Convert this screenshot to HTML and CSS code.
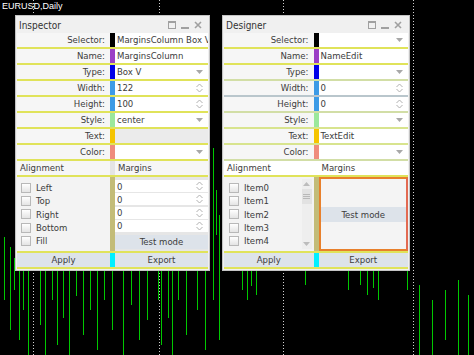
FILE: index.html
```html
<!DOCTYPE html>
<html>
<head>
<meta charset="utf-8">
<link rel="stylesheet" href="styles.css">
</head>
<body>
<div class="chart">
  <svg class="grid-lines" width="474" height="355">
    <g class="dots">
      <line x1="33.5" y1="0" x2="33.5" y2="355"/>
      <line x1="159.5" y1="0" x2="159.5" y2="355"/>
      <line x1="283.5" y1="0" x2="283.5" y2="355"/>
      <line x1="413.5" y1="0" x2="413.5" y2="355"/>
    </g>
    <g class="bars">
      <line x1="4.5" y1="237" x2="4.5" y2="300"/>
      <line x1="10.5" y1="247" x2="10.5" y2="330"/>
      <line x1="14.5" y1="258" x2="14.5" y2="290"/>
      <line x1="19.5" y1="271" x2="19.5" y2="340"/>
      <line x1="23.5" y1="271" x2="23.5" y2="310"/>
      <line x1="28.5" y1="271" x2="28.5" y2="355"/>
      <line x1="40.5" y1="271" x2="40.5" y2="325"/>
      <line x1="45.5" y1="271" x2="45.5" y2="355"/>
      <line x1="52.5" y1="271" x2="52.5" y2="300"/>
      <line x1="57.5" y1="271" x2="57.5" y2="345"/>
      <line x1="63.5" y1="271" x2="63.5" y2="318"/>
      <line x1="69.5" y1="271" x2="69.5" y2="355"/>
      <line x1="76.5" y1="271" x2="76.5" y2="296"/>
      <line x1="83.5" y1="271" x2="83.5" y2="335"/>
      <line x1="90.5" y1="271" x2="90.5" y2="310"/>
      <line x1="97.5" y1="271" x2="97.5" y2="350"/>
      <line x1="104.5" y1="271" x2="104.5" y2="300"/>
      <line x1="112.5" y1="271" x2="112.5" y2="330"/>
      <line x1="123.5" y1="271" x2="123.5" y2="355"/>
      <line x1="131.5" y1="271" x2="131.5" y2="305"/>
      <line x1="139.5" y1="271" x2="139.5" y2="340"/>
      <line x1="147.5" y1="271" x2="147.5" y2="320"/>
      <line x1="158.5" y1="271" x2="158.5" y2="300"/>
      <line x1="161.5" y1="271" x2="161.5" y2="345"/>
      <line x1="168.5" y1="271" x2="168.5" y2="318"/>
      <line x1="172.5" y1="271" x2="172.5" y2="355"/>
      <line x1="178.5" y1="271" x2="178.5" y2="300"/>
      <line x1="186.5" y1="271" x2="186.5" y2="335"/>
      <line x1="197.5" y1="271" x2="197.5" y2="310"/>
      <line x1="205.5" y1="271" x2="205.5" y2="350"/>
      <line x1="213.5" y1="148" x2="213.5" y2="300"/>
      <line x1="216.5" y1="190" x2="216.5" y2="235"/>
      <line x1="219.5" y1="215" x2="219.5" y2="340"/>
      <line x1="242.5" y1="271" x2="242.5" y2="290"/>
      <line x1="247.5" y1="271" x2="247.5" y2="300"/>
      <line x1="251.5" y1="271" x2="251.5" y2="286"/>
      <line x1="256.5" y1="271" x2="256.5" y2="295"/>
      <line x1="305.5" y1="271" x2="305.5" y2="285"/>
      <line x1="348.5" y1="271" x2="348.5" y2="290"/>
      <line x1="360.5" y1="271" x2="360.5" y2="285"/>
      <line x1="367.5" y1="271" x2="367.5" y2="295"/>
      <line x1="373.5" y1="271" x2="373.5" y2="288"/>
      <line x1="378.5" y1="271" x2="378.5" y2="300"/>
      <line x1="407.5" y1="271" x2="407.5" y2="290"/>
      <line x1="419.5" y1="285" x2="419.5" y2="355"/>
      <line x1="432.5" y1="300" x2="432.5" y2="355"/>
      <line x1="445.5" y1="290" x2="445.5" y2="340"/>
      <line x1="458.5" y1="280" x2="458.5" y2="355"/>
      <line x1="468.5" y1="295" x2="468.5" y2="355"/>
    </g>
  </svg>
  <div class="symbol">EURUSD,Daily</div>
</div>

<div class="window w1">
  <div class="titlebar">
    <span class="title">Inspector</span>
    <span class="ctrls">
      <svg width="8" height="8" viewBox="0 0 8 8"><rect x="0.5" y="0.5" width="7" height="7" fill="none" stroke="#a0a0a0"/><line x1="0" y1="1.5" x2="8" y2="1.5" stroke="#a0a0a0"/></svg>
      <svg width="8" height="8" viewBox="0 0 8 8"><rect x="0" y="6" width="8" height="2" fill="#a0a0a0"/></svg>
      <svg width="8" height="8" viewBox="0 0 8 8"><path d="M1 1L7 7M7 1L1 7" stroke="#a0a0a0" stroke-width="1.6"/></svg>
    </span>
  </div>
  <div class="row"><div class="lbl">Selector:</div><div class="strip s-black"></div><div class="val">MarginsColumn Box V</div></div>
  <div class="row"><div class="lbl">Name:</div><div class="strip s-purple"></div><div class="val">MarginsColumn</div></div>
  <div class="row"><div class="lbl">Type:</div><div class="strip s-blue"></div><div class="val"><span>Box V</span><svg class="drop" width="7" height="4" viewBox="0 0 7 4"><path d="M0 0H7L3.5 4Z"/></svg></div></div>
  <div class="row"><div class="lbl">Width:</div><div class="strip s-sky"></div><div class="val"><span>122</span><svg class="spinarr" width="7" height="10" viewBox="0 0 7 10"><path d="M0.5 4L3.5 1L6.5 4M0.5 6L3.5 9L6.5 6" fill="none"/></svg></div></div>
  <div class="row"><div class="lbl">Height:</div><div class="strip s-sky"></div><div class="val"><span>100</span><svg class="spinarr" width="7" height="10" viewBox="0 0 7 10"><path d="M0.5 4L3.5 1L6.5 4M0.5 6L3.5 9L6.5 6" fill="none"/></svg></div></div>
  <div class="row"><div class="lbl">Style:</div><div class="strip s-green"></div><div class="val"><span>center</span><svg class="drop" width="7" height="4" viewBox="0 0 7 4"><path d="M0 0H7L3.5 4Z"/></svg></div></div>
  <div class="row"><div class="lbl">Text:</div><div class="strip s-gold"></div><div class="val disabled"></div></div>
  <div class="row"><div class="lbl">Color:</div><div class="strip s-salmon"></div><div class="val"><span></span><svg class="drop" width="7" height="4" viewBox="0 0 7 4"><path d="M0 0H7L3.5 4Z"/></svg></div></div>
  <div class="row head"><div class="hcell">Alignment</div><div class="strip s-light"></div><div class="hcell">Margins</div></div>
  <div class="lists">
    <div class="checks">
      <div class="check"><span class="box"></span>Left</div>
      <div class="check"><span class="box"></span>Top</div>
      <div class="check"><span class="box"></span>Right</div>
      <div class="check"><span class="box"></span>Bottom</div>
      <div class="check"><span class="box"></span>Fill</div>
    </div>
    <div class="strip s-olive"></div>
    <div class="margins">
      <div class="spin"><span>0</span><svg class="spinarr" width="7" height="10" viewBox="0 0 7 10"><path d="M0.5 4L3.5 1L6.5 4M0.5 6L3.5 9L6.5 6" fill="none"/></svg></div>
      <div class="spin"><span>0</span><svg class="spinarr" width="7" height="10" viewBox="0 0 7 10"><path d="M0.5 4L3.5 1L6.5 4M0.5 6L3.5 9L6.5 6" fill="none"/></svg></div>
      <div class="spin"><span>0</span><svg class="spinarr" width="7" height="10" viewBox="0 0 7 10"><path d="M0.5 4L3.5 1L6.5 4M0.5 6L3.5 9L6.5 6" fill="none"/></svg></div>
      <div class="spin"><span>0</span><svg class="spinarr" width="7" height="10" viewBox="0 0 7 10"><path d="M0.5 4L3.5 1L6.5 4M0.5 6L3.5 9L6.5 6" fill="none"/></svg></div>
      <div class="btn test">Test mode</div>
    </div>
  </div>
  <div class="actions"><div class="btn">Apply</div><div class="strip s-cyan"></div><div class="btn">Export</div></div>
</div>

<div class="window w2">
  <div class="titlebar">
    <span class="title">Designer</span>
    <span class="ctrls">
      <svg width="8" height="8" viewBox="0 0 8 8"><rect x="0.5" y="0.5" width="7" height="7" fill="none" stroke="#a0a0a0"/><line x1="0" y1="1.5" x2="8" y2="1.5" stroke="#a0a0a0"/></svg>
      <svg width="8" height="8" viewBox="0 0 8 8"><rect x="0" y="6" width="8" height="2" fill="#a0a0a0"/></svg>
      <svg width="8" height="8" viewBox="0 0 8 8"><path d="M1 1L7 7M7 1L1 7" stroke="#a0a0a0" stroke-width="1.6"/></svg>
    </span>
  </div>
  <div class="row"><div class="lbl">Selector:</div><div class="strip s-black"></div><div class="val"><span></span><svg class="drop" width="7" height="4" viewBox="0 0 7 4"><path d="M0 0H7L3.5 4Z"/></svg></div></div>
  <div class="row"><div class="lbl">Name:</div><div class="strip s-purple"></div><div class="val">NameEdit</div></div>
  <div class="row sep-pale"><div class="lbl">Type:</div><div class="strip s-blue"></div><div class="val"><span></span><svg class="drop" width="7" height="4" viewBox="0 0 7 4"><path d="M0 0H7L3.5 4Z"/></svg></div></div>
  <div class="row sep-grey"><div class="lbl">Width:</div><div class="strip s-sky"></div><div class="val"><span>0</span><svg class="spinarr" width="7" height="10" viewBox="0 0 7 10"><path d="M0.5 4L3.5 1L6.5 4M0.5 6L3.5 9L6.5 6" fill="none"/></svg></div></div>
  <div class="row sep-pale"><div class="lbl">Height:</div><div class="strip s-sky"></div><div class="val"><span>0</span><svg class="spinarr" width="7" height="10" viewBox="0 0 7 10"><path d="M0.5 4L3.5 1L6.5 4M0.5 6L3.5 9L6.5 6" fill="none"/></svg></div></div>
  <div class="row sep-lime"><div class="lbl">Style:</div><div class="strip s-green"></div><div class="val"><span></span><svg class="drop" width="7" height="4" viewBox="0 0 7 4"><path d="M0 0H7L3.5 4Z"/></svg></div></div>
  <div class="row sep-lime"><div class="lbl">Text:</div><div class="strip s-gold"></div><div class="val">TextEdit</div></div>
  <div class="row sep-pale"><div class="lbl">Color:</div><div class="strip s-salmon"></div><div class="val"><span></span><svg class="drop" width="7" height="4" viewBox="0 0 7 4"><path d="M0 0H7L3.5 4Z"/></svg></div></div>
  <div class="row head"><div class="hcell white">Alignment</div><div class="strip s-white"></div><div class="hcell white">Margins</div></div>
  <div class="lists">
    <div class="checks scrolled">
      <div class="items">
        <div class="check"><span class="box"></span>Item0</div>
        <div class="check"><span class="box"></span>Item1</div>
        <div class="check"><span class="box"></span>Item2</div>
        <div class="check"><span class="box"></span>Item3</div>
        <div class="check"><span class="box"></span>Item4</div>
      </div>
      <div class="scrollbar">
        <svg width="7" height="4" viewBox="0 0 7 4"><path d="M0 4H7L3.5 0Z"/></svg>
        <div class="thumb"><svg width="7" height="5" viewBox="0 0 7 5"><path d="M0 0.5H7M0 2.5H7M0 4.5H7" stroke="#b8b8b8"/></svg></div>
        <svg class="down" width="7" height="4" viewBox="0 0 7 4"><path d="M0 0H7L3.5 4Z"/></svg>
      </div>
    </div>
    <div class="strip s-olive"></div>
    <div class="frame">
      <div class="btn test">Test mode</div>
    </div>
  </div>
  <div class="actions"><div class="btn">Apply</div><div class="strip s-cyan"></div><div class="btn">Export</div></div>
</div>
</body>
</html>
```

FILE: styles.css
```css
* { box-sizing: border-box; margin: 0; padding: 0; }
html, body { width: 474px; height: 355px; overflow: hidden; background: #000; }
body { position: relative; font-family: "DejaVu Sans Condensed", "Liberation Sans", Arial, sans-serif; font-size: 9.5px; color: #3c3c3c; }

.chart { position: absolute; left: 0; top: 0; width: 474px; height: 355px; }
.grid-lines { position: absolute; left: 0; top: 0; }
.dots line { stroke: #d0d0d0; stroke-width: 1; stroke-dasharray: 1 2; }
.bars line { stroke: #00c800; stroke-width: 1; }
.symbol { position: absolute; left: 2px; top: 1px; color: #fff; font-family: "Liberation Sans", Arial, sans-serif; font-size: 9px; line-height: 11px; }

.window { position: absolute; top: 15px; height: 256px; background: #f0f0f0; border: 1px solid #c4c4c4; padding: 0 1px 1px; display: flex; flex-direction: column; }
.w1 { left: 15px; width: 195px; }
.w2 { left: 222px; width: 188px; }

.titlebar { height: 17px; flex: none; display: flex; align-items: center; justify-content: space-between; padding: 1px 6px 0 2px; }
.title { font-size: 10px; color: #333; }
.ctrls { display: flex; gap: 5px; align-items: center; }
.ctrls svg { display: block; }

.row { display: grid; grid-template-columns: 1fr 5px 1fr; height: 16px; flex: none; border-bottom: 2px solid #e0e35a; }
.row.sep-pale { border-bottom-color: #d2dea6; }
.row.sep-grey { border-bottom-color: #b9c6cc; }
.row.sep-lime { border-bottom-color: #d8e48e; }
.lbl { background: #f6f6f6; text-align: right; padding-right: 5px; line-height: 14px; white-space: nowrap; }
.val { background: #fff; padding: 0 5px 0 2px; line-height: 14px; display: flex; justify-content: space-between; align-items: center; white-space: nowrap; overflow: hidden; }
.val.disabled { background: #ebebeb; }
.hcell { background: #f6f6f6; line-height: 14px; padding-left: 3px; }
.hcell.white { background: #fff; }

.strip { height: 100%; }
.s-black { background: #000; }
.s-purple { background: #9b3fc6; }
.s-blue { background: #0000e8; }
.s-sky { background: #3d9be6; }
.s-green { background: #9be89b; }
.s-gold { background: #f5c400; }
.s-salmon { background: #ef8c7c; }
.s-light { background: #e4e4e4; }
.s-white { background: #fff; }
.s-olive { background: #c3bc78; }
.s-cyan { background: #00f0ff; }

.drop path { fill: #a8a8a8; }
.spinarr path { stroke: #b0b0b0; stroke-width: 1; }
.drop, .spinarr { flex: none; display: block; }

.lists { display: grid; grid-template-columns: 1fr 5px 1fr; height: 76px; flex: none; border-bottom: 2px solid #e0e35a; }
.checks { background: #f3f3f3; padding: 4px 0 0 4px; }
.check { display: flex; align-items: center; gap: 5px; height: 13.33px; }
.box { width: 10px; height: 10px; border: 1px solid #b8b8b8; background: linear-gradient(#ffffff, #e4e4e4); flex: none; }

.checks.scrolled { display: flex; padding: 0; }
.items { flex: 1; padding: 4px 0 0 5px; }
.scrollbar { width: 10px; margin: 2px 2px 2px 0; display: flex; flex-direction: column; align-items: center; padding-top: 3px; background: #eeeeee; }
.scrollbar svg path { fill: #bcbcbc; }
.thumb { margin-top: 3px; width: 10px; height: 15px; background: #e2e2e2; display: flex; align-items: center; justify-content: center; }
.scrollbar .down { margin-top: auto; margin-bottom: 3px; }

.margins { display: flex; flex-direction: column; padding-top: 3px; background: #e6e6e6; }
.spin { height: 12px; margin-bottom: 1.33px; background: #fff; display: flex; justify-content: space-between; align-items: center; padding: 0 5px 0 2px; }
.btn { background: #dde3ea; text-align: center; line-height: 14px; }
.margins .test { margin: auto 0 2px; height: 14px; }

.frame { border: 2px solid #e8802c; border-right-color: #e26a52; background: #f4f4f4; display: flex; flex-direction: column; justify-content: center; }
.frame .test { height: 15px; line-height: 15px; }

.actions { display: grid; grid-template-columns: 1fr 5px 1fr; height: 16px; flex: none; border-bottom: 2px solid #e0e35a; background: #dde3ea; }
.actions .btn { line-height: 14px; }
```
